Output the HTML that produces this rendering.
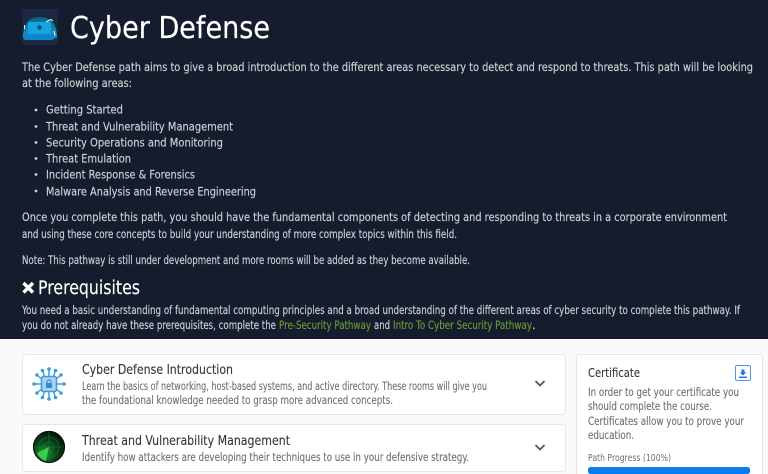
<!DOCTYPE html>
<html lang="en">
<head>
<meta charset="utf-8">
<title>Cyber Defense</title>
<style>
html,body{margin:0;padding:0;width:768px;height:474px;overflow:hidden;background:#fafafa}
svg{display:block}
text{font-family:"DejaVu Sans","Liberation Sans",sans-serif}
.b{font-size:11.5px;fill:#cfd1d5;stroke:#cfd1d5;stroke-width:.15px}
.d{font-size:11.300px;fill:#6b6e72;stroke:#6b6e72;stroke-width:.12px}
.h{font-size:13.500px;fill:#33363a;stroke:#33363a;stroke-width:.12px}
.g{font-size:11.5px;fill:#6f9e34;stroke:#6f9e34;stroke-width:.12px}
</style>
</head>
<body>
<svg width="768" height="474" viewBox="0 0 768 474" xmlns="http://www.w3.org/2000/svg">
<defs>
<radialGradient id="rad" cx="0.35" cy="0.7" r="0.7"><stop offset="0" stop-color="#1da035"/><stop offset="0.5" stop-color="#0a4a1a"/><stop offset="1" stop-color="#03180a"/></radialGradient>
<linearGradient id="dome" x1="0" y1="0" x2="0" y2="1"><stop offset="0" stop-color="#125f80"/><stop offset="1" stop-color="#17a3bd"/></linearGradient>
</defs>
<rect width="768" height="339" fill="#151c2d"/>
<rect y="339" width="768" height="135" fill="#fafafa"/>

<!-- logo -->
<rect x="22" y="9" width="36" height="36" rx="2" fill="#1a2842"/>
<path d="M23 38 Q23 17 40 17 Q57 17 57 38Z" fill="url(#dome)"/>
<rect x="28" y="22" width="23" height="12" fill="#12a5e2"/>
<path d="M23 34 L57 34 L57 37 L52 40 L25 40 L23 38Z" fill="#0e86cc"/>
<circle cx="39.500" cy="27.500" r="2.200" fill="#0c4a70"/>
<path d="M46 22 L51 19.500 L53 21 M54 31 L55 36 M24.500 25 L24.500 29" stroke="#dff3fa" stroke-width="1" fill="none"/>

<text x="70" y="38" font-size="30.500" fill="#fff" stroke="#fff" stroke-width=".2" textLength="200" lengthAdjust="spacingAndGlyphs">Cyber Defense</text>

<text class="b" x="22" y="71" textLength="731" lengthAdjust="spacingAndGlyphs">The Cyber Defense path aims to give a broad introduction to the different areas necessary to detect and respond to threats. This path will be looking</text>
<text class="b" x="22" y="87" textLength="110" lengthAdjust="spacingAndGlyphs">at the following areas:</text>

<circle cx="36" cy="110" r="1.400" fill="#cfd1d5"/>
<circle cx="36" cy="126.500" r="1.400" fill="#cfd1d5"/>
<circle cx="36" cy="142.500" r="1.400" fill="#cfd1d5"/>
<circle cx="36" cy="158.500" r="1.400" fill="#cfd1d5"/>
<circle cx="36" cy="174.500" r="1.400" fill="#cfd1d5"/>
<circle cx="36" cy="191" r="1.400" fill="#cfd1d5"/>
<text class="b" x="46" y="113.500" textLength="77" lengthAdjust="spacingAndGlyphs">Getting Started</text>
<text class="b" x="46" y="130.500" textLength="187" lengthAdjust="spacingAndGlyphs">Threat and Vulnerability Management</text>
<text class="b" x="46" y="146.500" textLength="177" lengthAdjust="spacingAndGlyphs">Security Operations and Monitoring</text>
<text class="b" x="46" y="162.500" textLength="85" lengthAdjust="spacingAndGlyphs">Threat Emulation</text>
<text class="b" x="46" y="178.500" textLength="149" lengthAdjust="spacingAndGlyphs">Incident Response &amp; Forensics</text>
<text class="b" x="46" y="195.500" textLength="210" lengthAdjust="spacingAndGlyphs">Malware Analysis and Reverse Engineering</text>

<text class="b" x="22" y="221" textLength="705" lengthAdjust="spacingAndGlyphs">Once you complete this path, you should have the fundamental components of detecting and responding to threats in a corporate environment</text>
<text class="b" x="22" y="238" textLength="435" lengthAdjust="spacingAndGlyphs">and using these core concepts to build your understanding of more complex topics within this field.</text>
<text class="b" x="22" y="264" textLength="448" lengthAdjust="spacingAndGlyphs">Note: This pathway is still under development and more rooms will be added as they become available.</text>

<path d="M23.500 283 L33 292.500 M33 283 L23.500 292.500" stroke="#fff" stroke-width="3.400" fill="none"/>
<text x="38" y="294" font-size="18.500" fill="#fff" stroke="#fff" stroke-width=".15" textLength="102" lengthAdjust="spacingAndGlyphs">Prerequisites</text>
<text class="b" x="22" y="314" textLength="718" lengthAdjust="spacingAndGlyphs">You need a basic understanding of fundamental computing principles and a broad understanding of the different areas of cyber security to complete this pathway. If</text>
<text class="b" x="22" y="329" textLength="254" lengthAdjust="spacingAndGlyphs">you do not already have these prerequisites, complete the</text>
<text class="g" x="279" y="329" textLength="92" lengthAdjust="spacingAndGlyphs">Pre-Security Pathway</text>
<text class="b" x="374" y="329" textLength="16" lengthAdjust="spacingAndGlyphs">and</text>
<text class="g" x="393" y="329" textLength="139" lengthAdjust="spacingAndGlyphs">Intro To Cyber Security Pathway</text>
<text class="b" x="532" y="329">.</text>

<!-- card 1 -->
<rect x="22.500" y="354.500" width="543" height="60" rx="3" fill="#fff" stroke="#e6e6e6"/>
<g stroke="#3d9be0" stroke-width="1.400" fill="none">
<path d="M49 384V369.500 M45 378L42.500 370.500 M53 378L55.500 370.500 M43 380L37 375 M55 380L61 375 M42 384H34.500 M56 384H63.500 M43 388L37 393 M55 388L61 393 M45 390L42.500 397.500 M53 390L55.500 397.500 M49 390V398.500"/>
</g>
<g fill="#3d9be0">
<circle cx="49" cy="369" r="1.800"/><circle cx="42.500" cy="370.500" r="1.800"/><circle cx="55.500" cy="370.500" r="1.800"/><circle cx="37" cy="375" r="1.800"/><circle cx="61" cy="375" r="1.800"/><circle cx="34" cy="384" r="1.800"/><circle cx="64" cy="384" r="1.800"/><circle cx="37" cy="393" r="1.800"/><circle cx="61" cy="393" r="1.800"/><circle cx="42.500" cy="397.500" r="1.800"/><circle cx="55.500" cy="397.500" r="1.800"/><circle cx="49" cy="399" r="1.800"/>
</g>
<rect x="41.500" y="376.500" width="15" height="15" rx="2" fill="#a9d3f3" stroke="#3d9be0" stroke-width="1.600"/>
<rect x="46" y="383" width="6" height="5" fill="#3d86c8"/>
<path d="M47 383V381.500Q49 378 51 381.500V383" fill="none" stroke="#3d86c8" stroke-width="1"/>

<text class="h" x="82" y="374" textLength="151" lengthAdjust="spacingAndGlyphs">Cyber Defense Introduction</text>
<text class="d" x="82" y="390" textLength="405" lengthAdjust="spacingAndGlyphs">Learn the basics of networking, host-based systems, and active directory. These rooms will give you</text>
<text class="d" x="82" y="404" textLength="311" lengthAdjust="spacingAndGlyphs">the foundational knowledge needed to grasp more advanced concepts.</text>
<path d="M535.500 381 L540 385.500 L544.500 381" fill="none" stroke="#555" stroke-width="1.800"/>

<!-- card 2 -->
<rect x="22.500" y="424.500" width="543" height="47" rx="3" fill="#fff" stroke="#e6e6e6"/>
<circle cx="49" cy="447" r="15.500" fill="url(#rad)" stroke="#0c0f0c" stroke-width="1.200"/>
<g fill="none" stroke="#167a30" stroke-width="0.600">
<circle cx="49" cy="447" r="5"/><circle cx="49" cy="447" r="10"/><path d="M34 447H64M49 432V462"/>
</g>
<path d="M49 447 L37 453 Q40 459 46 461Z" fill="#35d04e"/>
<text class="h" x="82" y="445" textLength="208" lengthAdjust="spacingAndGlyphs">Threat and Vulnerability Management</text>
<text class="d" x="82" y="461" textLength="387" lengthAdjust="spacingAndGlyphs">Identify how attackers are developing their techniques to use in your defensive strategy.</text>
<path d="M535.500 445 L540 449.500 L544.500 445" fill="none" stroke="#555" stroke-width="1.800"/>

<!-- certificate -->
<rect x="576.500" y="354.500" width="186" height="130" rx="3" fill="#fff" stroke="#e6e6e6"/>
<text x="588" y="377" font-size="12.500" fill="#33363a" stroke="#33363a" stroke-width=".1" textLength="52" lengthAdjust="spacingAndGlyphs">Certificate</text>
<rect x="735.500" y="365.500" width="15" height="15" rx="1.500" fill="#fff" stroke="#4d94f5"/>
<path d="M741.500 369.500h3v3h1.800l-3.300 3-3.300-3h1.800z M739 376.500h8v1.500h-8z" fill="#1a76e8"/>
<text class="d" x="588" y="396" textLength="151" lengthAdjust="spacingAndGlyphs">In order to get your certificate you</text>
<text class="d" x="588" y="410" textLength="124" lengthAdjust="spacingAndGlyphs">should complete the course.</text>
<text class="d" x="588" y="425" textLength="156" lengthAdjust="spacingAndGlyphs">Certificates allow you to prove your</text>
<text class="d" x="588" y="439" textLength="46" lengthAdjust="spacingAndGlyphs">education.</text>
<text x="588" y="461" font-size="9.800" fill="#6b6e72" textLength="83" lengthAdjust="spacingAndGlyphs">Path Progress (100%)</text>
<rect x="588" y="467" width="162" height="7" rx="2.500" fill="#0a7cf0"/>
</svg>
</body>
</html>
